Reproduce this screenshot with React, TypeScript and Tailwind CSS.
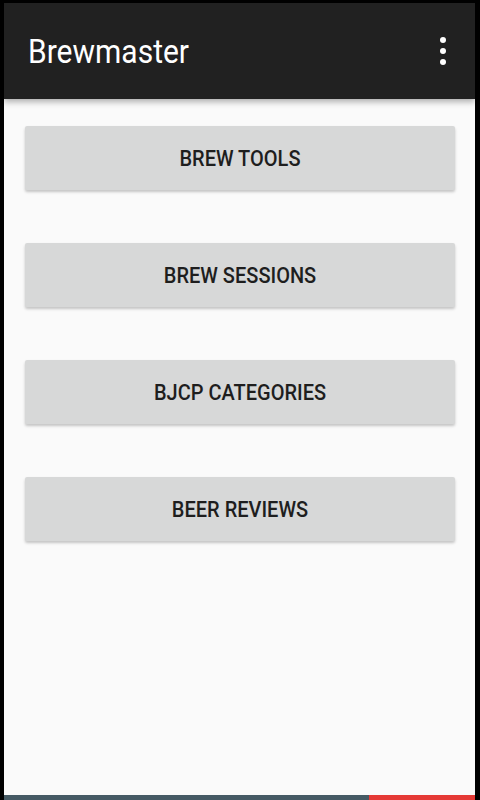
import React from "react";

const items = ["BREW TOOLS", "BREW SESSIONS", "BJCP CATEGORIES", "BEER REVIEWS"];

export default function App() {
  return (
    <div
      className="w-[480px] h-[800px] bg-black flex flex-col pt-[3px] pl-[4px] pr-[5px] overflow-hidden"
      style={{ fontFamily: "Roboto, 'Noto Sans', sans-serif" }}
    >
      <div className="h-[96px] bg-[#212121] flex items-center justify-between pl-[24px] pr-[29px] relative z-10 shadow-[0_3px_6px_rgba(0,0,0,0.3)]">
        <span className="text-white text-[30px] leading-none scale-y-[1.08] origin-center tracking-[0px] mt-[1px]">
          Brewmaster
        </span>
        <div className="flex flex-col gap-[5px] items-center">
          <span className="w-[6px] h-[6px] rounded-full bg-white" />
          <span className="w-[6px] h-[6px] rounded-full bg-white" />
          <span className="w-[6px] h-[6px] rounded-full bg-white" />
        </div>
      </div>
      <div className="flex-1 bg-[#fafafa] flex flex-col gap-[53px] pt-[27px] pl-[21px] pr-[20px]">
        {items.map((t) => (
          <div
            key={t}
            className="h-[64px] bg-[#d7d8d8] rounded-[2px] flex items-center justify-center shadow-[0_2px_3px_rgba(0,0,0,0.22)]"
          >
            <span className="text-[20px] font-medium text-[#1e1e1e] leading-none scale-y-[1.08]">
              {t}
            </span>
          </div>
        ))}
      </div>
      <div className="h-[5px] flex shrink-0">
        <div className="w-[365px] bg-[#455a64]" />
        <div className="flex-1 bg-[#e53935]" />
      </div>
    </div>
  );
}
